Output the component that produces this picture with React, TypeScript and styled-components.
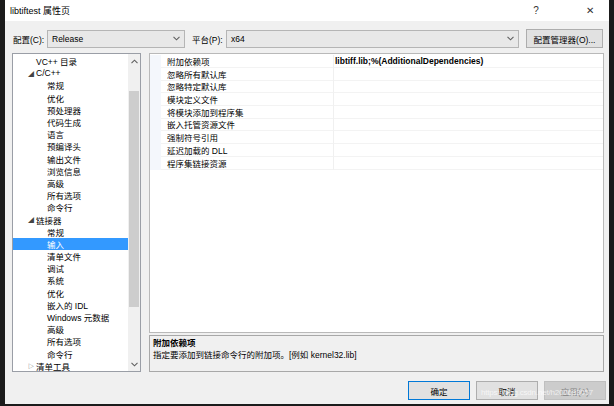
import React from "react";
import styled, { createGlobalStyle } from "styled-components";

const GlobalStyle = createGlobalStyle`
  body {
    margin: 0;
    background: #1b1b1b;
    font-family: "Liberation Sans", "Noto Sans CJK SC", sans-serif;
    font-size: 8.5px;
    color: #000;
  }
`;

const Screen = styled.div`
  display: flex;
  height: 406px;
  padding: 0 5px 2px 5px;
  box-sizing: border-box;
`;

const Window = styled.div`
  position: relative;
  display: flex;
  flex-direction: column;
  width: 604px;
  height: 404px;
  background: #f0f0f0;
`;

const TitleBar = styled.div`
  display: flex;
  align-items: center;
  gap: 24px;
  height: 21px;
  padding: 0 4px 0 5px;
  background: #fff;
  font-size: 9px;
`;

const Title = styled.div`
  flex: 1;
`;

const TitleIcon = styled.div`
  width: 30px;
  text-align: center;
  color: #333;
  font-size: 10px;
`;

const Toolbar = styled.div`
  display: flex;
  align-items: center;
  height: 19px;
  margin-top: 8px;
  padding-left: 8px;
`;

const Label = styled.div<{ $w: number }>`
  width: ${(p) => p.$w}px;
`;

const Select = styled.div<{ $w: number }>`
  display: flex;
  align-items: center;
  width: ${(p) => p.$w}px;
  height: 18px;
  box-sizing: border-box;
  padding: 0 4px;
  background: #e8e8e8;
  border: 1px solid #b5b5b5;
  margin-right: 7px;
`;

const SelectText = styled.div`
  flex: 1;
`;

const Button = styled.div<{ $w: number; $primary?: boolean; $disabled?: boolean }>`
  display: flex;
  align-items: center;
  justify-content: center;
  width: ${(p) => p.$w}px;
  height: 19px;
  box-sizing: border-box;
  background: ${(p) => (p.$disabled ? "#cccccc" : "#e1e1e1")};
  border: 1px solid ${(p) => (p.$primary ? "#0078d7" : p.$disabled ? "#bfbfbf" : "#adadad")};
  color: ${(p) => (p.$disabled ? "#838383" : "#000")};
`;

const Body = styled.div`
  display: flex;
  gap: 8px;
  height: 319px;
  margin-top: 5px;
  padding-left: 7px;
`;

const Tree = styled.div`
  display: flex;
  width: 129px;
  box-sizing: border-box;
  border: 1px solid #9a9ea6;
  background: #fff;
`;

const TreeList = styled.div`
  flex: 1;
  padding-top: 1px;
`;

const TreeRow = styled.div<{ $indent: number; $selected?: boolean }>`
  display: flex;
  align-items: center;
  height: 12.2px;
  padding-left: ${(p) => p.$indent}px;
  background: ${(p) => (p.$selected ? "#3399ff" : "transparent")};
  color: ${(p) => (p.$selected ? "#fff" : "#000")};
  white-space: nowrap;
`;

const Toggle = styled.span`
  display: inline-block;
  width: 8px;
  font-size: 6px;
  color: #444;
`;

const ScrollBar = styled.div`
  display: flex;
  flex-direction: column;
  align-items: center;
  width: 12px;
  background: #f0f0f0;
`;

const ScrollArrow = styled.div`
  display: flex;
  align-items: center;
  justify-content: center;
  height: 14px;
  width: 100%;
`;

const ScrollTrack = styled.div`
  flex: 1;
  width: 100%;
  padding-top: 23px;
  box-sizing: border-box;
`;

const ScrollThumb = styled.div`
  width: 10px;
  margin: 0 auto;
  height: 216px;
  background: #cdcdcd;
`;

const RightPane = styled.div`
  display: flex;
  flex-direction: column;
  gap: 2px;
  width: 455px;
`;

const Grid = styled.div`
  flex: 1;
  box-sizing: border-box;
  border: 1px solid #b9b9b9;
  background: #fff;
  padding-top: 1px;
`;

const GridRow = styled.div`
  display: grid;
  grid-template-columns: 11px 172px 1fr;
  height: 12.7px;
`;

const Margin = styled.div`
  background: #f4f7fc;
`;

const NameCell = styled.div`
  display: flex;
  align-items: center;
  padding-left: 6px;
  border-bottom: 1px solid #f3f3f3;
`;

const ValueCell = styled.div`
  display: flex;
  align-items: center;
  padding-left: 1px;
  border-left: 1px solid #f0f0f0;
  border-bottom: 1px solid #f3f3f3;
  font-weight: bold;
`;

const Desc = styled.div`
  height: 37px;
  box-sizing: border-box;
  border: 1px solid #a8a8a8;
  padding: 1px 3px;
  line-height: 12px;
`;

const DescTitle = styled.div`
  font-weight: bold;
`;

const Footer = styled.div`
  display: flex;
  justify-content: flex-end;
  gap: 6px;
  margin-top: 9px;
  padding-right: 3px;
`;

const Watermark = styled.div`
  position: absolute;
  left: 476px;
  top: 388px;
  font-size: 8px;
  letter-spacing: -0.2px;
  color: rgba(255, 255, 255, 0.7);
  white-space: nowrap;
  pointer-events: none;
`;

const Chevron = ({ up }: { up?: boolean }) => (
  <svg width="7" height="5" viewBox="0 0 7 5">
    <path
      d={up ? "M0.5 4.2 L3.5 1.2 L6.5 4.2" : "M0.5 0.8 L3.5 3.8 L6.5 0.8"}
      fill="none"
      stroke="#606060"
      strokeWidth="1.1"
    />
  </svg>
);

type TreeItem = { text: string; level: number; toggle?: "open" | "closed"; selected?: boolean };

const treeItems: TreeItem[] = [
  { text: "VC++ 目录", level: 1 },
  { text: "C/C++", level: 1, toggle: "open" },
  { text: "常规", level: 2 },
  { text: "优化", level: 2 },
  { text: "预处理器", level: 2 },
  { text: "代码生成", level: 2 },
  { text: "语言", level: 2 },
  { text: "预编译头", level: 2 },
  { text: "输出文件", level: 2 },
  { text: "浏览信息", level: 2 },
  { text: "高级", level: 2 },
  { text: "所有选项", level: 2 },
  { text: "命令行", level: 2 },
  { text: "链接器", level: 1, toggle: "open" },
  { text: "常规", level: 2 },
  { text: "输入", level: 2, selected: true },
  { text: "清单文件", level: 2 },
  { text: "调试", level: 2 },
  { text: "系统", level: 2 },
  { text: "优化", level: 2 },
  { text: "嵌入的 IDL", level: 2 },
  { text: "Windows 元数据", level: 2 },
  { text: "高级", level: 2 },
  { text: "所有选项", level: 2 },
  { text: "命令行", level: 2 },
  { text: "清单工具", level: 1, toggle: "closed" },
];

const gridRows = [
  { name: "附加依赖项", value: "libtiff.lib;%(AdditionalDependencies)" },
  { name: "忽略所有默认库", value: "" },
  { name: "忽略特定默认库", value: "" },
  { name: "模块定义文件", value: "" },
  { name: "将模块添加到程序集", value: "" },
  { name: "嵌入托管资源文件", value: "" },
  { name: "强制符号引用", value: "" },
  { name: "延迟加载的 DLL", value: "" },
  { name: "程序集链接资源", value: "" },
];

const App = () => {
  return (
    <Screen>
      <GlobalStyle />
      <Window>
        <TitleBar>
          <Title>libtiftest 属性页</Title>
          <TitleIcon>?</TitleIcon>
          <TitleIcon>✕</TitleIcon>
        </TitleBar>
        <Toolbar>
          <Label $w={34}>配置(C):</Label>
          <Select $w={138}>
            <SelectText>Release</SelectText>
            <Chevron />
          </Select>
          <Label $w={34}>平台(P):</Label>
          <Select $w={293}>
            <SelectText>x64</SelectText>
            <Chevron />
          </Select>
          <Button $w={77}>配置管理器(O)...</Button>
        </Toolbar>
        <Body>
          <Tree>
            <TreeList>
              {treeItems.map((item, i) => (
                <TreeRow key={i} $indent={item.level === 1 ? 15 : 34} $selected={item.selected}>
                  {item.level === 1 && (
                    <Toggle>{item.toggle === "open" ? "◢" : item.toggle === "closed" ? "▷" : ""}</Toggle>
                  )}
                  {item.text}
                </TreeRow>
              ))}
            </TreeList>
            <ScrollBar>
              <ScrollArrow>
                <Chevron up />
              </ScrollArrow>
              <ScrollTrack>
                <ScrollThumb />
              </ScrollTrack>
              <ScrollArrow>
                <Chevron />
              </ScrollArrow>
            </ScrollBar>
          </Tree>
          <RightPane>
            <Grid>
              {gridRows.map((row, i) => (
                <GridRow key={i}>
                  <Margin />
                  <NameCell>{row.name}</NameCell>
                  <ValueCell>{row.value}</ValueCell>
                </GridRow>
              ))}
            </Grid>
            <Desc>
              <DescTitle>附加依赖项</DescTitle>
              <div>指定要添加到链接命令行的附加项。[例如 kernel32.lib]</div>
            </Desc>
          </RightPane>
        </Body>
        <Footer>
          <Button $w={62} $primary>确定</Button>
          <Button $w={62}>取消</Button>
          <Button $w={62} $disabled>应用(A)</Button>
        </Footer>
        <Watermark>https://blog.csdn.net/h200683057</Watermark>
      </Window>
    </Screen>
  );
};

export default App;
